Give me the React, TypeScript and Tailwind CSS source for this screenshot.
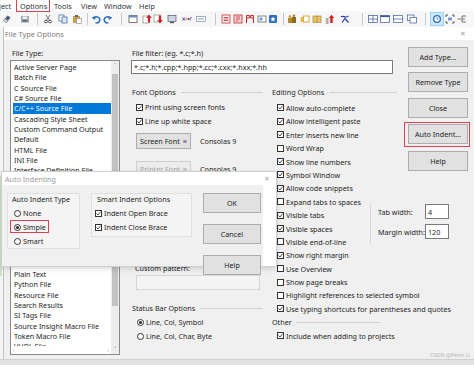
import React from 'react';

type Tb = { k: string; c: string };

// toolbar items, each slot is 10px wide; margins are taken from the screenshot
const toolbar: Tb[] = [
  { k: 'eraser', c: 'ml-[2px]' },
  { k: 'disk', c: 'ml-[8px]' },
  { k: '|', c: 'ml-[7px]' },
  { k: 'cut', c: 'ml-[5px]' },
  { k: 'copy', c: 'ml-[5px]' },
  { k: 'paste', c: 'ml-[4px]' },
  { k: '|', c: 'ml-[5px]' },
  { k: 'undo', c: 'ml-[3px]' },
  { k: 'redo', c: 'ml-[2px]' },
  { k: '|', c: 'ml-[8px]' },
  { k: 'window', c: 'ml-[6px]' },
  { k: 'up', c: 'ml-[4px]' },
  { k: 'down', c: 'ml-[1px]' },
  { k: 'monitor', c: 'ml-[4px]' },
  { k: 'xr', c: 'ml-[5px]' },
  { k: 'bar', c: 'ml-[4px]' },
  { k: '|', c: 'ml-[9px]' },
  { k: 'red1', c: 'ml-[5px]' },
  { k: 'red2', c: 'ml-[2px]' },
  { k: 'gate', c: 'ml-[2px]' },
  { k: 'doc', c: 'ml-[2px]' },
  { k: 'star', c: 'ml-[1px]' },
  { k: '|', c: 'ml-[5px]' },
  { k: 'people', c: 'ml-[3px]' },
  { k: 'ten', c: 'ml-[3px]' },
  { k: 'book', c: 'ml-[2px]' },
  { k: 'sort', c: 'ml-[3px]' },
  { k: 'squiggle', c: 'ml-[5px]' },
  { k: '|', c: 'ml-[12px]' },
  { k: 'tile1', c: 'ml-[5px]' },
  { k: 'tile2', c: 'ml-[2px]' },
  { k: 'tile3', c: 'ml-[3px]' },
  { k: 'tile4', c: 'ml-[4px]' },
  { k: '|', c: 'ml-[8px]' },
  { k: 'clock', c: 'ml-[4px]' },
  { k: 'corners', c: 'ml-[3px]' },
  { k: 'tree', c: 'ml-[2px]' },
];

function Glyph({ k }: { k: string }) {
  switch (k) {
    case 'eraser':
      return (
        <>
          <path d="M1.5 6.5 L5.5 1.5 L8.5 3.5 L4.5 8.5 Z" fill="#4a5a7a" />
          <path d="M1.5 6.5 L3 4.6 L6 6.6 L4.5 8.5 Z" fill="#e8e8e8" stroke="#4a5a7a" strokeWidth="0.6" />
        </>
      );
    case 'disk':
      return (
        <>
          <rect x="1" y="2" width="8" height="6.5" fill="#9aa0a8" />
          <rect x="2.5" y="2.5" width="5" height="2.5" fill="#eeeeee" />
          <rect x="3" y="6" width="4" height="2" fill="#6d737c" />
        </>
      );
    case 'cut':
      return (
        <>
          <path d="M3.6 6 L7 1 M6.4 6 L3 1" stroke="#6a6a6a" strokeWidth="0.9" />
          <circle cx="3" cy="7.5" r="1.4" fill="none" stroke="#444" strokeWidth="0.9" />
          <circle cx="7" cy="7.5" r="1.4" fill="none" stroke="#444" strokeWidth="0.9" />
        </>
      );
    case 'copy':
      return (
        <>
          <rect x="1" y="1" width="5" height="6" fill="#fff" stroke="#4a72b0" strokeWidth="0.8" />
          <rect x="4" y="3" width="5" height="6" fill="#d8e6f6" stroke="#4a72b0" strokeWidth="0.8" />
        </>
      );
    case 'paste':
      return (
        <>
          <rect x="1" y="2" width="7" height="7" fill="#c9a24a" />
          <rect x="3" y="1" width="3" height="2" fill="#666" />
          <rect x="4.5" y="4.5" width="5" height="5" fill="#fff" stroke="#888" strokeWidth="0.6" />
        </>
      );
    case 'undo':
      return (
        <>
          <path d="M3 4.5 A3 3 0 1 1 4.5 8.6" fill="none" stroke="#2a6ebb" strokeWidth="1.5" />
          <path d="M0.6 3.6 L4.6 2 L4 6 Z" fill="#2a6ebb" />
        </>
      );
    case 'redo':
      return (
        <>
          <path d="M7 4.5 A3 3 0 1 0 5.5 8.6" fill="none" stroke="#2a6ebb" strokeWidth="1.5" />
          <path d="M9.4 3.6 L5.4 2 L6 6 Z" fill="#2a6ebb" />
        </>
      );
    case 'window':
      return (
        <>
          <rect x="1" y="1.5" width="8" height="7" fill="#fff" stroke="#555" strokeWidth="0.8" />
          <rect x="1" y="1.5" width="8" height="2" fill="#6b8fc7" />
        </>
      );
    case 'up':
      return (
        <>
          <rect x="1" y="2" width="6" height="7" fill="#fff" stroke="#777" strokeWidth="0.6" />
          <path d="M7 0.5 L9.8 4 H8.1 V8.5 H5.9 V4 H4.2 Z" fill="#d02020" />
        </>
      );
    case 'down':
      return (
        <>
          <rect x="1" y="1" width="6" height="7" fill="#fff" stroke="#777" strokeWidth="0.6" />
          <path d="M7 9.5 L9.8 6 H8.1 V1.5 H5.9 V6 H4.2 Z" fill="#d02020" />
        </>
      );
    case 'monitor':
      return (
        <>
          <rect x="1" y="1.5" width="8" height="6" fill="#cfd8e6" stroke="#556" strokeWidth="0.7" />
          <rect x="3" y="8" width="4" height="1.2" fill="#556" />
        </>
      );
    case 'xr':
      return (
        <>
          <path d="M0.5 3.5 L3 6.5 M3 3.5 L0.5 6.5" stroke="#2a3f8a" strokeWidth="0.9" />
          <path d="M3.8 5 H7 M6 4 L7 5 L6 6" stroke="#c02020" strokeWidth="0.8" fill="none" />
          <path d="M8 6.5 V4 Q8.5 3.4 9.6 3.6" stroke="#2a3f8a" strokeWidth="0.9" fill="none" />
        </>
      );
    case 'bar':
      return (
        <>
          <rect x="0.5" y="2.5" width="9" height="5" fill="#fff" stroke="#7890b0" strokeWidth="0.7" />
          <path d="M2 5 H8" stroke="#7890b0" strokeWidth="0.9" />
        </>
      );
    case 'red1':
      return (
        <>
          <rect x="1" y="1" width="8" height="8" fill="#fff" stroke="#c62828" strokeWidth="0.8" />
          <path d="M2.5 3.5 H7.5 M2.5 5 H7.5 M2.5 6.5 H7.5" stroke="#c62828" strokeWidth="0.8" />
        </>
      );
    case 'red2':
      return (
        <>
          <rect x="1" y="1" width="8" height="8" fill="#f7d6d6" stroke="#c62828" strokeWidth="0.8" />
          <path d="M3 3 H7 M3 5 H7 M3 7 H5" stroke="#c62828" strokeWidth="0.8" />
        </>
      );
    case 'gate':
      return (
        <path d="M1.5 9 V1.5 H4.3 V4 H1.5 M8.5 9 V1.5 H5.7 V4 H8.5" fill="none" stroke="#c62828" strokeWidth="1" />
      );
    case 'doc':
      return (
        <>
          <rect x="1" y="2" width="8" height="6" fill="#fff" stroke="#555" strokeWidth="0.7" />
          <rect x="2.5" y="3.5" width="3" height="3" fill="#7a9bd0" />
        </>
      );
    case 'star':
      return (
        <>
          <rect x="1" y="1" width="8" height="8" rx="1" fill="#2f6fc0" />
          <path d="M5 2.5 L5.8 4.3 L7.7 4.4 L6.2 5.6 L6.7 7.4 L5 6.4 L3.3 7.4 L3.8 5.6 L2.3 4.4 L4.2 4.3 Z" fill="#fff" />
        </>
      );
    case 'people':
      return (
        <>
          <rect x="1" y="4" width="4" height="5" fill="#b58a2a" />
          <rect x="5" y="3" width="4" height="6" fill="#8a6a20" />
          <circle cx="3" cy="2.6" r="1.4" fill="#c99a3a" />
          <circle cx="7" cy="1.8" r="1.2" fill="#a67e2a" />
        </>
      );
    case 'ten':
      return (
        <>
          <rect x="0.8" y="3" width="1.8" height="5" fill="#e0b020" />
          <rect x="3.5" y="2" width="5.5" height="6" fill="#fff" stroke="#d0a020" strokeWidth="0.9" />
        </>
      );
    case 'book':
      return (
        <>
          <rect x="1" y="2" width="8" height="6.5" fill="#e8c46a" stroke="#9a7a20" strokeWidth="0.6" />
          <path d="M5 2 V8.5" stroke="#9a7a20" strokeWidth="0.6" />
        </>
      );
    case 'sort':
      return (
        <>
          <path d="M6.5 0.8 L9.3 4 H7.7 V9 H5.3 V4 H3.7 Z" fill="#d02020" />
          <path d="M0.8 5 H3.5 M0.8 7 H3.5 M0.8 9 H3.5" stroke="#444" strokeWidth="0.8" />
        </>
      );
    case 'squiggle':
      return (
        <path d="M1 3 C3 0.5 5 5 8.5 2 M2 8.5 L5 4.5 L8.5 8.5" stroke="#2a3fa0" strokeWidth="1.2" fill="none" />
      );
    case 'tile1':
      return (
        <>
          <rect x="0.5" y="1.5" width="9" height="7" fill="#fff" stroke="#3a5a9a" strokeWidth="0.7" />
          <path d="M0.5 5 H9.5 M5 1.5 V8.5" stroke="#3a5a9a" strokeWidth="0.7" />
        </>
      );
    case 'tile2':
      return (
        <>
          <rect x="0.5" y="1.5" width="9" height="7" fill="#fff" stroke="#3a5a9a" strokeWidth="0.7" />
          <rect x="0.5" y="1.5" width="9" height="1.6" fill="#3a5a9a" />
        </>
      );
    case 'tile3':
      return (
        <>
          <rect x="0.5" y="1.5" width="9" height="7" fill="#fff" stroke="#3a5a9a" strokeWidth="0.7" />
          <path d="M0.5 5 H9.5" stroke="#3a5a9a" strokeWidth="0.7" />
        </>
      );
    case 'tile4':
      return (
        <>
          <rect x="0.5" y="1" width="6.5" height="5.5" fill="#fff" stroke="#3a5a9a" strokeWidth="0.7" />
          <rect x="3" y="3.5" width="6.5" height="5.5" fill="#fff" stroke="#3a5a9a" strokeWidth="0.7" />
        </>
      );
    case 'clock':
      return (
        <>
          <circle cx="5" cy="5" r="4" fill="#2a6ebb" />
          <circle cx="5" cy="5" r="2.7" fill="#fff" />
          <path d="M5 3 V5 H6.5" stroke="#2a6ebb" strokeWidth="0.8" fill="none" />
        </>
      );
    case 'corners':
      return (
        <>
          <path d="M1 3 V1 H3 M7 1 H9 V3 M9 7 V9 H7 M3 9 H1 V7" stroke="#444" strokeWidth="0.9" fill="none" />
          <rect x="3" y="3.5" width="4" height="3" fill="#7a9bd0" />
        </>
      );
    case 'tree':
      return <path d="M0.5 5 H4 M5 2 H9 M5 2 V8 H9 M5 5 H8" stroke="#555" strokeWidth="0.8" fill="none" />;
    default:
      return null;
  }
}

function ToolIcon({ item }: { item: Tb }) {
  if (item.k === '|') {
    return <span className={`${item.c} w-[1px] h-[12px] bg-[#c9c9c9] shrink-0`} />;
  }
  if (item.k === 'clock') {
    return (
      <span className={`${item.c} -mx-[2px] w-[14px] h-[14px] shrink-0 flex items-center justify-center bg-[#cce8ff] border border-[#99d1ff]`}>
        <svg viewBox="0 0 10 10" className="w-[10px] h-[10px]">
          <Glyph k={item.k} />
        </svg>
      </span>
    );
  }
  return (
    <svg viewBox="0 0 10 10" className={`${item.c} w-[10px] h-[10px] shrink-0`}>
      <Glyph k={item.k} />
    </svg>
  );
}

function Check({ on = false, label, className = '' }: { on?: boolean; label: string; className?: string }) {
  return (
    <div className={`flex items-center whitespace-nowrap ${className}`}>
      <span className="w-[7px] h-[7px] shrink-0 border border-[#333] bg-white flex items-center justify-center">
        {on && (
          <svg viewBox="0 0 5 5" className="w-[5px] h-[5px]">
            <path d="M0.5 2.5 L2 4 L4.6 0.7" fill="none" stroke="#222" strokeWidth="0.8" />
          </svg>
        )}
      </span>
      <span className="ml-[2px]">{label}</span>
    </div>
  );
}

function Radio({ on = false, label, className = '' }: { on?: boolean; label: string; className?: string }) {
  return (
    <div className={`flex items-center whitespace-nowrap ${className}`}>
      <span className="w-[7px] h-[7px] shrink-0 rounded-full border border-[#333] bg-white flex items-center justify-center">
        {on && <span className="w-[3px] h-[3px] rounded-full bg-[#222]" />}
      </span>
      <span className="ml-[2px]">{label}</span>
    </div>
  );
}

function GroupHeader({ label, className = '' }: { label: string; className?: string }) {
  return (
    <div className={`flex items-center h-[10px] ${className}`}>
      <span className="whitespace-nowrap">{label}</span>
      <span className="flex-1 ml-[5px] border-t border-[#d3d3d3]" />
    </div>
  );
}

function Button({ children, className = '' }: { children: React.ReactNode; className?: string }) {
  return (
    <div className={`h-[20px] flex items-center justify-center whitespace-nowrap bg-[#e1e1e1] border border-[#adadad] ${className}`}>
      {children}
    </div>
  );
}

const fileTypes = [
  'Active Server Page',
  'Batch File',
  'C Source File',
  'C# Source File',
  'C/C++ Source File',
  'Cascading Style Sheet',
  'Custom Command Output',
  'Default',
  'HTML File',
  'INI File',
  'Interface Definition File',
  'Java Source File',
  'JavaScript File',
  'Make File',
  'Objective-C File',
  'Pascal Source File',
  'Perl Source File',
  'PHP Source File',
  'PL/SQL File',
  'PowerShell File',
  'Plain Text',
  'Python File',
  'Resource File',
  'Search Results',
  'SI Tags File',
  'Source Insight Macro File',
  'Token Macro File',
  'VHDL File',
];

const editing: [string, boolean][] = [
  ['Allow auto-complete', true],
  ['Allow intelligent paste', true],
  ['Enter inserts new line', true],
  ['Word Wrap', false],
  ['Show line numbers', true],
  ['Symbol Window', true],
  ['Allow code snippets', true],
  ['Expand tabs to spaces', false],
  ['Visible tabs', true],
  ['Visible spaces', true],
  ['Visible end-of-line', false],
  ['Show right margin', true],
  ['Use Overview', false],
  ['Show page breaks', false],
  ['Highlight references to selected symbol', false],
  ['Use typing shortcuts for parentheses and quotes', true],
];

function FileList() {
  return (
    <div className="mt-[2px] h-[295px] border border-[#8a8a8a] bg-white flex">
      <div className="flex-1 flex flex-col min-w-0">
        <div className="flex-1 overflow-hidden pt-[1px]">
          {fileTypes.map((t) => (
            <div
              key={t}
              className={`h-[10.35px] leading-[10.35px] ml-[2px] pl-[1px] whitespace-nowrap ${
                t === 'C/C++ Source File' ? 'bg-[#0078d7] text-white' : ''
              }`}
            >
              {t}
            </div>
          ))}
        </div>
        <div className="h-[8px] flex items-center justify-between px-[2px] text-[#9a9a9a] text-[6px] leading-[8px]">
          <span>‹</span>
          <span>›</span>
        </div>
      </div>
      <div className="w-[8px] flex flex-col items-center bg-[#ededed]">
        <span className="h-[9px] text-[6px] leading-[9px] text-[#555]">˄</span>
        <div className="w-[6px] h-[232px] mt-[4px] bg-[#c2c2c2]" />
        <div className="flex-1" />
        <span className="h-[9px] text-[6px] leading-[9px] text-[#555]">˅</span>
      </div>
    </div>
  );
}

function AutoIndenting() {
  return (
    <div className="absolute left-[2px] top-[172px] w-[274px] h-[94px] bg-white shadow-[0_0_0_1px_#cfcfcf,0_2px_6px_rgba(0,0,0,0.18)] flex flex-col">
      <div className="h-[13px] flex items-center justify-between pl-[3px] pr-[6px] text-[#9a9a9a]">
        <span>Auto Indenting</span>
        <span className="text-[7px] text-[#aaa]">✕</span>
      </div>
      <div className="h-[81px] w-[261px] bg-[#f0f0f0] flex items-start">
        <div className="ml-[5px] mt-[8px] w-[73px] h-[56px] border border-[#e0e0e0] bg-[#f4f4f4]">
          <div className="pl-[4px] h-[10px]">Auto Indent Type</div>
          <div className="mt-[2px] pl-[6px]">
            <Radio label="None" className="h-[14px]" />
            <div className="relative">
              <Radio on label="Simple" className="h-[14px]" />
              <span className="absolute -left-[4px] top-[0px] w-[39px] h-[13px] border border-[#d9434f]" />
            </div>
            <Radio label="Smart" className="h-[14px]" />
          </div>
        </div>
        <div className="ml-[11px] mt-[8px] w-[101px] h-[44px] border border-[#e0e0e0] bg-[#f4f4f4]">
          <div className="pl-[5px] h-[10px]">Smart Indent Options</div>
          <div className="mt-[2px] pl-[3px]">
            <Check on label="Indent Open Brace" className="h-[14px]" />
            <Check on label="Indent Close Brace" className="h-[14px]" />
          </div>
        </div>
        <div className="ml-[11px] mt-[8px] w-[58px]">
          <Button className="h-[16px]">OK</Button>
          <Button className="h-[16px] mt-[11px]">Cancel</Button>
          <Button className="h-[16px] mt-[11px]">Help</Button>
        </div>
      </div>
    </div>
  );
}

export default function App() {
  return (
    <div className="relative w-[474px] h-[365px] overflow-hidden bg-[#f3f3f3] text-[#1e1e1e] font-['Noto_Sans','Open_Sans',sans-serif] text-[7.2px] leading-[10px]">
      {/* menu bar */}
      <div className="h-[11px] bg-white flex items-center text-[7.3px] text-[#333]">
        <span className="w-[21px] -ml-[1px]">ject</span>
        <span className="relative w-[34px]">
          Options
          <span className="absolute -left-[4px] -top-[2px] w-[34px] h-[13px] border border-[#d9434f]" />
        </span>
        <span className="w-[27px]">Tools</span>
        <span className="w-[23px]">View</span>
        <span className="w-[35px]">Window</span>
        <span>Help</span>
      </div>

      {/* toolbar */}
      <div className="h-[16px] bg-[#f7f7f7] flex items-center">
        {toolbar.map((t, i) => (
          <ToolIcon key={i} item={t} />
        ))}
      </div>

      {/* File Type Options window */}
      <div className="ml-[3px] h-[332px] border-l border-[#c4c4c4] flex flex-col">
        <div className="h-[13px] bg-white flex items-center justify-between pl-[1px] pr-[8px] text-[7.3px] text-[#7a7a7a]">
          <span>File Type Options</span>
          <span className="text-[7px] text-[#a0a0a0]">✕</span>
        </div>
        <div className="h-[319px] bg-[#f0f0f0] flex">
          {/* file type list */}
          <div className="ml-[6px] w-[110px] pt-[8px]">
            <div className="h-[10px] pl-[2px]">File Type:</div>
            <FileList />
          </div>

          {/* options */}
          <div className="ml-[11px] w-[266px] pt-[8px]">
            <div className="h-[10px] pl-[1px]">File filter: (eg. *.c;*.h)</div>
            <div className="mt-[2px] w-[262px] h-[14px] border border-[#7a7a7a] bg-white pl-[2px] flex items-center">
              *.c;*.h;*.cpp;*.hpp;*.cc;*.cxx;*.hxx;*.hh
            </div>

            <div className="mt-[13px] flex items-start">
              {/* font options */}
              <div className="w-[132px] shrink-0">
                <GroupHeader label="Font Options" className="pl-[1px]" />
                <div className="mt-[3px] pl-[5px]">
                  <Check on label="Print using screen fonts" className="h-[14px]" />
                  <Check on label="Line up white space" className="h-[14px]" />
                </div>
                <div className="mt-[5px] pl-[5px] flex items-center">
                  <div className="w-[55px] h-[16px] bg-[#e1e1e1] border border-[#adadad] flex items-center justify-between whitespace-nowrap px-[3px]">
                    <span>Screen Font</span>
                    <span className="text-[#555]">≡</span>
                  </div>
                  <span className="ml-[9px]">Consolas 9</span>
                </div>
                <div className="mt-[12px] pl-[5px] flex items-center">
                  <div className="w-[55px] h-[16px] bg-[#ececec] border border-[#cfcfcf] flex items-center justify-between whitespace-nowrap px-[3px] text-[#a8a8a8]">
                    <span>Printer Font</span>
                    <span>≡</span>
                  </div>
                  <span className="ml-[9px]">Consolas 9</span>
                </div>
                <div className="mt-[86px] h-[10px] pl-[4px]">Custom pattern:</div>
                <div className="mt-[2px] ml-[5px] w-[124px] h-[15px] border border-[#d6d6d6] bg-[#f4f4f4]" />
                <GroupHeader label="Status Bar Options" className="mt-[13px] pl-[1px]" />
                <div className="mt-[2px] pl-[6px]">
                  <Radio on label="Line, Col, Symbol" className="h-[14px]" />
                  <Radio label="Line, Col, Char, Byte" className="h-[14px]" />
                </div>
              </div>

              {/* editing options */}
              <div className="ml-[9px] w-[125px] shrink-0">
                <GroupHeader label="Editing Options" />
                <div className="flex items-start">
                  <div className="w-[98px] shrink-0 pt-[4.3px] pl-[5px]">
                    {editing.map(([label, on]) => (
                      <Check key={label} on={on} label={label} className="h-[13.4px]" />
                    ))}
                    <div className="-ml-[5px] -mr-[10px] h-[13.4px] flex items-center">
                      <span>Other</span>
                      <span className="flex-1 ml-[4px] border-t border-[#d3d3d3]" />
                    </div>
                    <Check on label="Include when adding to projects" className="h-[13.4px]" />
                  </div>
                  <div className="mt-[106px] shrink-0 h-[41px] border-l border-[#dadada] pl-[7px]">
                    <div className="mt-[1px] h-[15px] flex items-center">
                      <span className="w-[47px]">Tab width:</span>
                      <span className="w-[24px] h-[15px] border border-[#7a7a7a] bg-white pl-[2px] flex items-center">4</span>
                    </div>
                    <div className="mt-[5px] h-[15px] flex items-center">
                      <span className="w-[47px] whitespace-nowrap">Margin width:</span>
                      <span className="w-[24px] h-[15px] border border-[#7a7a7a] bg-white pl-[2px] flex items-center">120</span>
                    </div>
                  </div>
                </div>
              </div>
            </div>
          </div>

          {/* buttons */}
          <div className="ml-[11px] w-[60px] pt-[7px] flex flex-col">
            <Button>Add Type...</Button>
            <Button className="mt-[5px]">Remove Type</Button>
            <Button className="mt-[6px]">Close</Button>
            <div className="relative mt-[6px]">
              <Button>Auto Indent...</Button>
              <span className="absolute -left-[4px] -top-[2px] w-[66px] h-[25px] border border-[#d9434f]" />
            </div>
            <Button className="mt-[7px]">Help</Button>
            <div className="mt-auto -mr-[2px] h-[8px] leading-[8px] text-right text-[5.5px] text-[#b5b5b5]">
              CSDN @Penn Li
            </div>
          </div>
        </div>
      </div>
      <div className="h-[6px] bg-[#e2e2e2] border-t border-[#d0d0d0]" />

      {/* desktop edge showing through on the left */}
      <div className="absolute left-0 top-[176px] w-[2px] h-[100px] bg-[#cfe2c6]" />

      <AutoIndenting />
    </div>
  );
}
